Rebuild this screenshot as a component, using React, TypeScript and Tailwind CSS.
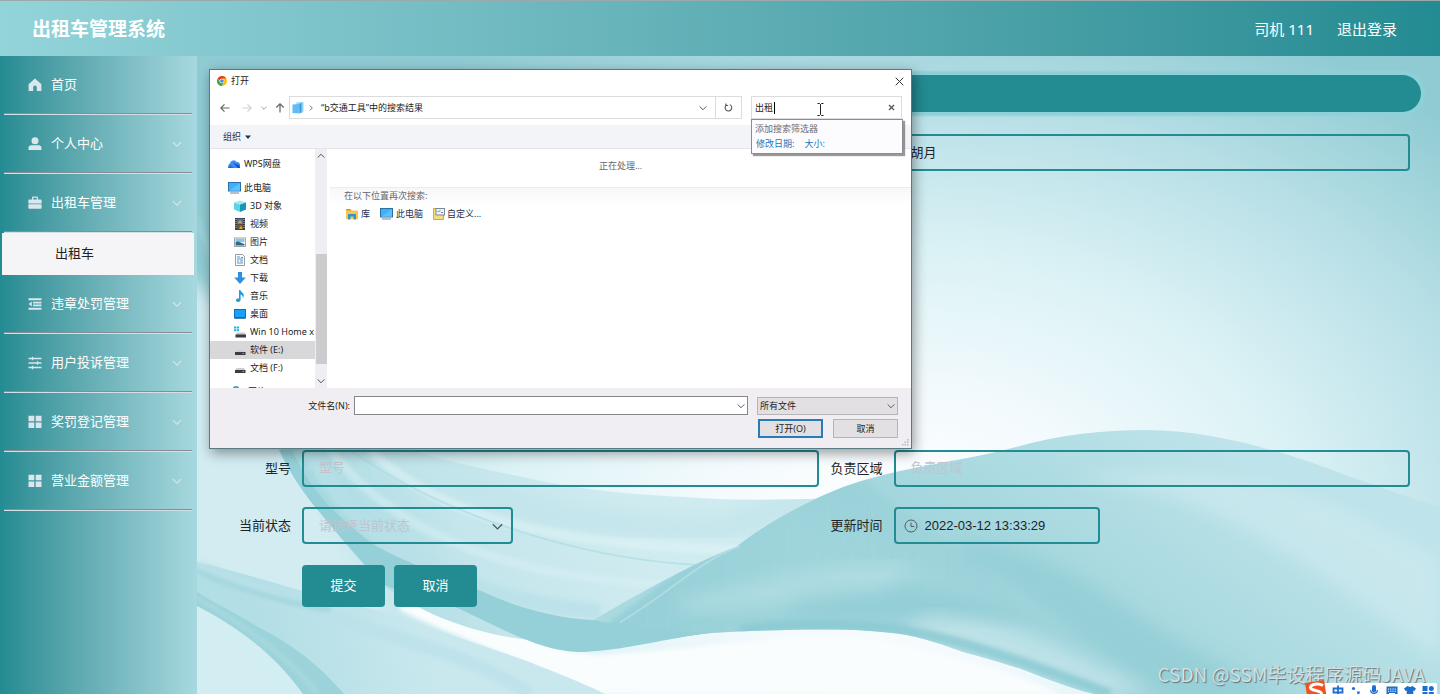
import React, { useState } from "react"

interface iconProps {
    className?: string
}

function HomeIcon({ className = "" }: iconProps) {
    return <svg viewBox="0 0 14 14" className={className} fill="currentColor">
        <path d="M7 .6 .6 6.200V13h4.600V9.300a1.800 1.800 0 0 1 3.600 0V13h4.600V6.200z" />
    </svg>
}

function UserIcon({ className = "" }: iconProps) {
    return <svg viewBox="0 0 14 14" className={className} fill="currentColor">
        <circle cx="7" cy="3.700" r="3.500" />
        <path d="M.5 13v-2.200c0-1.800 1.200-2.600 2.800-2.600h7.400c1.600 0 2.800.8 2.800 2.600V13z" />
    </svg>
}

function CaseIcon({ className = "" }: iconProps) {
    return <svg viewBox="0 0 14 14" className={className} fill="currentColor">
        <path d="M5 .6h4a1 1 0 0 1 1 1v1.800h2.800a.8.8 0 0 1 .8.8v3.200H.4V4.200a.8.8 0 0 1 .8-.8H4V1.600a1 1 0 0 1 1-1zm.2 1.200v1.600h3.600V1.800zM.4 8.200h13.200V12a.8.8 0 0 1-.8.8H1.200a.8.8 0 0 1-.8-.8z" />
    </svg>
}

function UnfoldIcon({ className = "" }: iconProps) {
    return <svg viewBox="0 0 14 14" className={className} fill="currentColor">
        <path d="M.5 1.300h13v2H.5zM5 4.700h8.500v1.700H5zM5 7.600h8.500v1.700H5zM.5 10.700h13v2H.5zM3.800 4.500v5L.6 7z" />
    </svg>
}

function OperationIcon({ className = "" }: iconProps) {
    return <svg viewBox="0 0 14 14" className={className} stroke="currentColor" fill="none" strokeWidth="1.300">
        <path d="M.5 2.500h13M.5 7h13M.5 11.500h13M4.500.8v3.400M9.500 5.300v3.400M4.500 9.800v3.400" />
    </svg>
}

function GridIcon({ className = "" }: iconProps) {
    return <svg viewBox="0 0 14 14" className={className} fill="currentColor">
        <path d="M.5 .8h5.800v5.400H.5zM7.700.8h5.800v5.400H7.700zM.5 7.500h5.800v5.400H.5zM7.700 7.500h5.800v5.400H7.700z" />
    </svg>
}

function ChevronDown({ className = "" }: iconProps) {
    return <svg viewBox="0 0 10 10" className={className} fill="none" stroke="currentColor" strokeWidth="1.200">
        <path d="M.8 3 5 7.200 9.200 3" />
    </svg>
}

function ClockIcon({ className = "" }: iconProps) {
    return <svg viewBox="0 0 14 14" className={className} fill="none" stroke="currentColor" strokeWidth="1">
        <circle cx="7" cy="7" r="6" />
        <path d="M7 3.500v4h3.200" />
    </svg>
}

function ChromeIcon({ className = "" }: iconProps) {
    return <svg viewBox="0 0 24 24" className={className}>
        <circle cx="12" cy="12" r="12" fill="#fbc116" />
        <path d="M1.600 6A12 12 0 0 1 22.400 6H12a6 6 0 0 0-5.600 4z" fill="#e33b2e" />
        <path d="M1.600 6A12 12 0 0 0 11 24l5-8.500A6 6 0 0 1 6.800 15z" fill="#2da94f" />
        <circle cx="12" cy="12" r="5.600" fill="#fff" />
        <circle cx="12" cy="12" r="4.400" fill="#4285f4" />
    </svg>
}

function CloudIcon({ className = "" }: iconProps) {
    return <svg viewBox="0 0 12 12" className={className}>
        <path d="M2.500 10A2.300 2.300 0 0 1 2 5.500 3.600 3.600 0 0 1 8.600 4a3 3 0 0 1 .9 6z" fill="#3d8df5" />
        <path d="M0 10c0-2 2-3 3.500-2L6 10z" fill="#1f6be0" />
        <path d="M5 4.500 9.500 10H12c.2-2-1-3.500-3-3.500z" fill="#1557c0" />
    </svg>
}

function MonitorIcon({ className = "" }: iconProps) {
    return <svg viewBox="0 0 13 12" className={className}>
        <rect x=".5" y=".5" width="12" height="8.500" fill="#3fb0f7" stroke="#2b6fa3" />
        <path d="M1 9 12 1v8z" fill="#72cbff" opacity=".6" />
        <path d="M2 11h9" stroke="#8a97a3" strokeWidth="1.200" />
    </svg>
}

function CubeIcon({ className = "" }: iconProps) {
    return <svg viewBox="0 0 12 12" className={className}>
        <path d="M0 2.500 6 .5l6 2-6 2z" fill="#a5e9f2" />
        <path d="M0 2.500 6 4.500V12L0 9.500z" fill="#5fd3e4" />
        <path d="M12 2.500 6 4.500V12l6-2.500z" fill="#1795b5" />
    </svg>
}

function FilmIcon({ className = "" }: iconProps) {
    return <svg viewBox="0 0 12 12" className={className}>
        <rect x="1" width="10" height="12" fill="#3b3b42" />
        <rect x="3.200" y=".8" width="5.600" height="4.800" fill="#4f77c8" />
        <rect x="3.200" y="6.400" width="5.600" height="4.800" fill="#6d5a3a" />
        <path d="m3.200 5.600 3-3 2.600 3zM5 11l2-3.500L8.800 11z" fill="#e0a33a" />
        <path d="M2 1v10M10 1v10" stroke="#d9d9dd" strokeWidth=".9" strokeDasharray="1 1" />
    </svg>
}

function PictureIcon({ className = "" }: iconProps) {
    return <svg viewBox="0 0 12 12" className={className}>
        <rect x=".5" y="2" width="11" height="8.500" fill="#f4f7f9" stroke="#9aa5ad" />
        <rect x="1.600" y="3" width="8.800" height="3" fill="#8ac4ea" />
        <path d="M1.600 9.500V6l3-.5 3 1.500 2.800 1v1.500z" fill="#2f6c82" />
    </svg>
}

function DocIcon({ className = "" }: iconProps) {
    return <svg viewBox="0 0 12 12" className={className}>
        <path d="M1.500.5h7l2 2v9h-9z" fill="#fafafa" stroke="#9b9ba1" />
        <path d="M3 3h3M7 3.500h2M3 5h6M3 7h2M6 7h3M3 9h6" stroke="#4c9bd3" />
    </svg>
}

function DownloadIcon({ className = "" }: iconProps) {
    return <svg viewBox="0 0 12 12" className={className}>
        <path d="M4 0h4v5.500h3.800L6 12 .2 5.500H4z" fill="#2f8ee0" />
    </svg>
}

function MusicIcon({ className = "" }: iconProps) {
    return <svg viewBox="0 0 12 12" className={className}>
        <path d="M5 0h1.400c.3 2.200 3.400 2.500 3.400 5.500 0 1.200-.5 2-1 2.700.3-2-.6-3.200-2.200-3.700v5C6.600 11.300 5.300 12 4 12s-2.200-.8-2.200-1.900S3 8.300 5 8.400z" fill="#1e9be8" />
    </svg>
}

function DesktopIcon({ className = "" }: iconProps) {
    return <svg viewBox="0 0 12 12" className={className}>
        <rect x=".5" y="1.500" width="11" height="8.500" fill="#18a0fb" stroke="#1170bd" />
        <path d="M1 10h10" stroke="#0d4f8a" />
    </svg>
}

function WinDriveIcon({ className = "" }: iconProps) {
    return <svg viewBox="0 0 12 12" className={className}>
        <path d="M0 .5h2.200v2H0zM2.800.5H5v2H2.800zM0 3.200h2.200v2H0zM2.800 3.200H5v2H2.800z" fill="#20b3e8" />
        <path d="M3 6.500h7.500L12 9H1.500z" fill="#c9c9cd" />
        <rect x="1.500" y="8.500" width="10.500" height="3" fill="#3c3c40" />
    </svg>
}

function DriveIcon({ className = "" }: iconProps) {
    return <svg viewBox="0 0 12 12" className={className}>
        <path d="M2.500 6h7.500L11.500 8.500H1z" fill="#cfcfd3" />
        <rect x="1" y="8" width="10.500" height="3" fill="#3c3c40" />
        <rect x="8.500" y="9" width="1.500" height="1" fill="#5ec46a" />
    </svg>
}

function NetIcon({ className = "" }: iconProps) {
    return <svg viewBox="0 0 12 12" className={className}>
        <circle cx="4" cy="3.500" r="3.500" fill="#3f9fc8" />
        <rect x="3" y="4" width="9" height="6" fill="#5fc0ef" />
    </svg>
}

function LibraryIcon({ className = "" }: iconProps) {
    return <svg viewBox="0 0 12 12" className={className}>
        <path d="M0 1h4.500L5.500 2.500H12V11H0z" fill="#f5c84c" />
        <path d="M0 1h4.500L5.500 2.500H0z" fill="#d99b1f" />
        <path d="M2 11.500V6h8v5.500H7.500V8.500h-3v3z" fill="#3590d8" />
    </svg>
}

function CustomIcon({ className = "" }: iconProps) {
    return <svg viewBox="0 0 12 12" className={className}>
        <path d="M.5.500h5v3h5v8h-10z" fill="#f8dc7c" stroke="#cfa93a" />
        <rect x="3" y=".5" width="8.500" height="6.500" fill="#eef4fb" stroke="#7d8796" />
        <path d="m4.500 3 1 1L7.500 2M8 4.500h2" stroke="#2b6fa3" fill="none" strokeWidth=".8" />
    </svg>
}

function ResultsIcon({ className = "" }: iconProps) {
    return <svg viewBox="0 0 12 12" className={className}>
        <path d="M4 .5 11.500 0v9.500L9 11z" fill="#8fd6fb" />
        <path d="M.5 2.500 7.500 2v9.500L.5 11z" fill="#5dbdf6" />
        <path d="M7.500 2 9.500.800V10.500l-2 1z" fill="#3a9ade" />
    </svg>
}

// silk waves behind the form
function Waves() {
    return <svg viewBox="197 56 1243 638" preserveAspectRatio="none" className="absolute inset-0 h-full w-full">
        <defs>
            <radialGradient id="sky" gradientUnits="userSpaceOnUse" cx="0" cy="0" r="1" gradientTransform="translate(900 530) scale(800 560)">
                <stop offset="0" stopColor="#ffffff" />
                <stop offset=".25" stopColor="#f3fafd" />
                <stop offset=".5" stopColor="#dbf2f5" />
                <stop offset=".75" stopColor="#b9e0e7" />
                <stop offset="1" stopColor="#90cbd3" />
            </radialGradient>
            <linearGradient id="hill" gradientUnits="userSpaceOnUse" x1="1200" y1="430" x2="1020" y2="690">
                <stop offset="0" stopColor="#bee3ea" />
                <stop offset=".4" stopColor="#aedce2" />
                <stop offset=".8" stopColor="#a1d5dc" />
                <stop offset="1" stopColor="#a9dae0" />
            </linearGradient>
            <linearGradient id="valley" x1="0" y1="0" x2="1" y2="0">
                <stop offset="0" stopColor="#8ecbd4" />
                <stop offset="1" stopColor="#8ecbd4" stopOpacity="0" />
            </linearGradient>
            <linearGradient id="veil" gradientUnits="userSpaceOnUse" x1="340" y1="570" x2="600" y2="440">
                <stop offset="0" stopColor="#a9dae1" />
                <stop offset=".45" stopColor="#c5e6ec" />
                <stop offset="1" stopColor="#d0ecf0" />
            </linearGradient>
            <linearGradient id="cloth" gradientUnits="userSpaceOnUse" x1="260" y1="640" x2="420" y2="600">
                <stop offset="0" stopColor="#b2dee5" />
                <stop offset="1" stopColor="#c9e8ee" />
            </linearGradient>
            <filter id="soft"><feGaussianBlur stdDeviation="9" /></filter>
            <filter id="thin"><feGaussianBlur stdDeviation="2" /></filter>
            <clipPath id="hillClip">
                <path d="M593 620C650 587 700 560 736 547 770 520 820 495 849 485 900 467 970 460 1016 447 1060 435 1100 430 1147 430 1200 430 1260 445 1310 462 1360 480 1400 495 1440 507V694H1094C1070 688 1050 680 1024 670 1000 662 985 658 963 652 930 640 910 634 882 632 850 628 780 629 711 633 660 638 620 650 577 652z" />
            </clipPath>
            <clipPath id="veilClip">
                <path d="M279 446C300 490 340 540 381 583 420 615 480 635 530 640L593 620C650 587 700 560 736 547 780 515 810 500 837 498 780 500 730 501 687 497 620 494 570 488 523 477 470 466 430 458 401 446z" />
            </clipPath>
        </defs>
        <rect x="197" y="56" width="1243" height="638" fill="url(#sky)" />
        <path d="M150 260C260 300 290 420 340 520L420 694H150z" fill="#d2ecf1" filter="url(#soft)" />
        <path d="M400 580C480 600 520 650 600 655 700 650 800 630 880 640 960 660 1010 670 1060 694H590C530 660 460 640 400 610z" fill="#fafdfe" filter="url(#thin)" />
        <path d="M197 230C215 260 240 380 283 450L303 450C260 380 225 280 197 210z" fill="#9dd2da" filter="url(#thin)" />
        <path d="M279 446C300 490 340 540 381 583 420 615 480 635 530 640L593 620C650 587 700 560 736 547 780 515 810 500 837 498 780 500 730 501 687 497 620 494 570 488 523 477 470 466 430 458 401 446z" fill="url(#veil)" />
        <g clipPath="url(#veilClip)" fill="none">
            <path d="M410 450C500 520 600 525 720 530 L860 480" stroke="#c0e3ea" strokeWidth="26" opacity=".7" filter="url(#soft)" />
            <path d="M370 450C440 520 560 545 740 550" stroke="#def3f6" strokeWidth="10" opacity=".6" filter="url(#thin)" />
            <path d="M330 450C400 540 520 580 680 585" stroke="#daf1f5" strokeWidth="9" opacity=".5" filter="url(#thin)" />
            <path d="M310 450C370 560 470 600 600 612" stroke="#b8e0e8" strokeWidth="16" opacity=".7" filter="url(#thin)" />
            <path d="M350 450C450 520 590 560 700 565" stroke="#a9dae1" strokeWidth="2" opacity=".6" />
            <path d="M292 450C340 540 400 590 520 622" stroke="#a3d6de" strokeWidth="8" opacity=".7" filter="url(#thin)" />
        </g>
        <g clipPath="url(#hillClip)">
            <rect x="570" y="420" width="870" height="274" fill="url(#hill)" />
            <path d="M560 660 720 540 849 470 1020 600 882 650z" fill="url(#valley)" opacity=".8" filter="url(#thin)" />
            <path d="M1060 480C1200 480 1300 560 1440 660V560C1340 500 1230 450 1060 480z" fill="#cfebf0" opacity=".6" filter="url(#soft)" />
            <path d="M960 540C1050 550 1100 590 1160 630 1220 665 1260 680 1290 700H1180C1080 650 1040 590 960 560z" fill="#8ccad3" opacity=".6" filter="url(#soft)" />
            <path d="M800 590C860 575 960 590 1040 620 980 625 870 625 780 615z" fill="#8ecbd3" opacity=".7" filter="url(#soft)" />
            <path d="M930 615C1000 620 1080 650 1150 694H1100C1030 670 970 650 900 630z" fill="#c4e5ea" opacity=".8" filter="url(#soft)" />
            <path d="M680 600C760 580 820 560 920 565L880 590C800 600 740 612 680 612z" fill="#b9e1e6" opacity=".6" filter="url(#soft)" />
            <path d="M740 630C800 622 850 625 882 628 940 632 1020 660 1110 694" fill="none" stroke="#8ac9d2" strokeWidth="10" opacity=".8" filter="url(#thin)" />
            <path d="M620 622C660 600 700 560 740 546" fill="none" stroke="#b9e0e6" strokeWidth="2" opacity=".7" />
        </g>
        <path d="M279 450C300 495 328 522 381 583 405 595 430 598 458 608 500 628 540 651 577 652 620 652 670 637 711 633 670 632 630 628 593 620 555 618 520 608 490 595 440 572 400 562 370 542 335 515 310 490 292 450z" fill="#95cfd7" />
        <path d="M381 583C405 595 430 598 458 608 435 585 410 575 381 560z" fill="#95cfd7" />
        <path d="M197 562C230 570 265 580 299 590 340 602 370 608 401 617 450 635 490 648 524 660 560 674 590 686 605 694H303C270 650 240 620 197 600z" fill="url(#cloth)" />
        <path d="M197 566C270 600 340 620 420 645 470 660 500 675 530 694" fill="none" stroke="#bbe1ea" strokeWidth="14" opacity=".7" filter="url(#thin)" />
        <path d="M197 571C230 586 270 600 330 610" fill="none" stroke="#93cdd6" strokeWidth="5" opacity=".6" filter="url(#thin)" />
        <path d="M197 600C240 635 280 660 303 694H197z" fill="#d3eef2" />
        <path d="M197 592C215 604 240 615 258 627 300 648 325 672 344 694H303C275 655 240 628 197 606z" fill="#9cd3da" />
        <path d="M197 598C240 622 290 658 318 694" fill="none" stroke="#b5dfe5" strokeWidth="3" opacity=".7" filter="url(#thin)" />
    </svg>
}

const menus = [
    { name: "首页", Icon: HomeIcon, arrow: false },
    { name: "个人中心", Icon: UserIcon, arrow: true },
    { name: "出租车管理", Icon: CaseIcon, arrow: true, child: "出租车" },
    { name: "违章处罚管理", Icon: UnfoldIcon, arrow: true },
    { name: "用户投诉管理", Icon: OperationIcon, arrow: true },
    { name: "奖罚登记管理", Icon: GridIcon, arrow: true },
    { name: "营业金额管理", Icon: GridIcon, arrow: true },
]

function Sidebar() {
    return <nav className="w-[197px] shrink-0 bg-linear-to-r from-[#238b92] to-[#a6d9df] text-[13px] text-white">
        <ul>
            {menus.map(({ name, Icon, arrow, child }) => (
                <li key={name}>
                    <a href="#" className="mr-[5px] ml-1 flex h-[59px] items-center border-b border-[#d6dfe6] pr-[10px] pl-6 shadow-[inset_0_-1px_0_#8b8b94]">
                        <Icon className="mr-[9px] h-[14px] w-[14px] text-[#dbe6ef]" />
                        <span className="flex-1">{name}</span>
                        {arrow && <ChevronDown className="h-[10px] w-[10px] text-[#cfe3ea]" />}
                    </a>
                    {child && <a href="#" className="mr-[3px] ml-[2px] flex h-[42px] items-center bg-[#f5f4f7] pl-[53px] text-[#222]">{child}</a>}
                </li>
            ))}
        </ul>
    </nav>
}

interface fieldProps {
    id: string,
    label?: string,
    placeholder?: string,
    value?: string
}

function Field({ id, label, placeholder, value }: fieldProps) {
    return <div className="flex items-center">
        <label htmlFor={id} className="w-[75px] shrink-0 pr-[11px] text-right">{label}</label>
        <input id={id} defaultValue={value} placeholder={placeholder} className="h-[37px] min-w-0 flex-1 rounded-[4px] border-2 border-[#238b92] bg-transparent px-[15px] pb-[2px] placeholder:text-[#c3c3cd]" />
    </div>
}

function TaxiForm() {
    return <form className="mt-[22px] px-[30px] text-[13px] text-[#1f2326]" onSubmit={(e) => e.preventDefault()}>
        <div className="mb-[279px] grid grid-cols-2">
            <Field id="plate" />
            <Field id="driver" value="胡月" />
        </div>
        <div className="grid grid-cols-2 gap-y-5">
            <Field id="model" label="型号" placeholder="型号" />
            <Field id="area" label="负责区域" placeholder="负责区域" />
            <div className="flex items-center">
                <label htmlFor="state" className="w-[75px] shrink-0 pr-[11px] text-right">当前状态</label>
                <div className="relative">
                    <select id="state" className="h-[37px] w-[211px] appearance-none rounded-[4px] border-2 border-[#238b92] px-[15px] text-[#c3c3cd]">
                        <option>请选择当前状态</option>
                    </select>
                    <ChevronDown className="pointer-events-none absolute top-[14px] right-[10px] h-[11px] w-[11px] text-[#4d5559]" />
                </div>
            </div>
            <div className="flex items-center">
                <label htmlFor="time" className="w-[75px] shrink-0 pr-[11px] text-right">更新时间</label>
                <div className="flex h-[37px] w-[206px] items-center gap-[7px] rounded-[4px] border-2 border-[#238b92] pl-2">
                    <ClockIcon className="h-[14px] w-[14px] shrink-0 text-[#4d5f63]" />
                    <input id="time" defaultValue="2022-03-12 13:33:29" className="min-w-0 flex-1 bg-transparent" />
                </div>
            </div>
        </div>
        <div className="mt-[21px] ml-[75px] flex gap-[9px] text-white">
            <button type="submit" className="h-[42px] w-[83px] rounded-[4px] bg-[#238b92]">提交</button>
            <button type="button" className="h-[42px] w-[83px] rounded-[4px] bg-[#238b92]">取消</button>
        </div>
    </form>
}

const places = [
    { name: "3D 对象", Icon: CubeIcon },
    { name: "视频", Icon: FilmIcon },
    { name: "图片", Icon: PictureIcon },
    { name: "文档", Icon: DocIcon },
    { name: "下载", Icon: DownloadIcon },
    { name: "音乐", Icon: MusicIcon },
    { name: "桌面", Icon: DesktopIcon },
    { name: "Win 10 Home x", Icon: WinDriveIcon },
    { name: "软件 (E:)", Icon: DriveIcon },
    { name: "文档 (F:)", Icon: DriveIcon },
]

function PlaceTree() {
    const [active, setActive] = useState("软件 (E:)")

    return <div className="flex h-[239px] shrink-0">
        <ul className="w-[105px] overflow-hidden pt-[6px] whitespace-nowrap">
            <li className="mb-[6px] flex h-[18px] items-center gap-1 pl-[18px]"><CloudIcon className="h-3 w-3 shrink-0" />WPS网盘</li>
            <li className="flex h-[18px] items-center gap-[3px] pl-[18px]"><MonitorIcon className="h-3 w-[13px] shrink-0" />此电脑</li>
            {places.map(({ name, Icon }) => (
                <li key={name} onClick={() => setActive(name)} className={`flex h-[18px] items-center gap-1 pl-6 ${active === name ? "bg-[#d8d7da]" : ""}`}>
                    <Icon className="h-3 w-3 shrink-0" />{name}
                </li>
            ))}
            <li className="mt-[6px] flex h-[18px] items-center gap-1 pl-[22px]"><NetIcon className="h-3 w-3 shrink-0" />网络</li>
        </ul>
        <div className="flex w-3 flex-col items-center bg-[#f0eef2] py-[3px] text-[#4b4b50]">
            <ChevronDown className="h-2 w-2 rotate-180" />
            <div className="mt-[94px] h-[110px] w-[11px] bg-[#cdcbce]"></div>
            <ChevronDown className="mt-auto h-2 w-2" />
        </div>
    </div>
}

function OpenDialog() {
    return <div role="dialog" aria-label="打开" className="absolute top-[69px] left-[209px] w-[703px] border border-[#567b82] bg-white text-[9px] text-[#1c1c1e] shadow-[2px_4px_12px_rgba(0,0,0,0.4)]">
        <div className="flex h-[22px] items-center pr-[7px] pl-[7px]">
            <ChromeIcon className="mr-1 h-[10px] w-[10px]" />
            <span className="flex-1">打开</span>
            <button aria-label="关闭">
                <svg viewBox="0 0 9 9" className="h-[9px] w-[9px]" stroke="#333" fill="none"><path d="m.7.700 7.600 7.600M8.300.700.700 8.300" /></svg>
            </button>
        </div>
        <div className="mt-1 flex h-[23px] items-center pr-[9px] pl-[10px]">
            <svg viewBox="0 0 10 10" className="h-[10px] w-[10px]" stroke="#666" fill="none" strokeWidth="1.200"><path d="M9.500 5H1M4.500 1.300.800 5l3.700 3.700" /></svg>
            <svg viewBox="0 0 10 10" className="ml-3 h-[10px] w-[10px]" stroke="#cfcfd4" fill="none" strokeWidth="1.200"><path d="M.5 5H9M5.500 1.300 9.200 5 5.500 8.700" /></svg>
            <ChevronDown className="ml-[9px] h-[6px] w-[6px] text-[#777]" />
            <svg viewBox="0 0 10 10" className="ml-2 h-[10px] w-[10px]" stroke="#666" fill="none" strokeWidth="1.200"><path d="M5 9.500V1M1.300 4.500 5 .800l3.700 3.700" /></svg>
            <div className="ml-1 flex h-[23px] flex-1 items-center border border-[#dcdce0] pl-[2px]">
                <ResultsIcon className="h-3 w-3" />
                <ChevronDown className="mx-[4px] h-[6px] w-[6px] -rotate-90 text-[#444]" />
                <span className="ml-[3px] flex-1">“b交通工具”中的搜索结果</span>
                <ChevronDown className="mr-2 h-2 w-2 text-[#555]" />
                <div className="flex h-full w-[26px] items-center justify-center border-l border-[#dcdce0]">
                    <svg viewBox="0 0 10 10" className="h-[9px] w-[9px]" stroke="#555" fill="none" strokeWidth="1.200"><path d="M6.500 1.800A3.700 3.700 0 1 1 3 2M2 .500v2.300h2.500" /></svg>
                </div>
            </div>
            <div className="relative ml-[9px] flex h-[23px] w-[151px] items-center border border-[#dcdce0] pr-[6px] pl-[3px]">
                <input aria-label="搜索" defaultValue="出租" className="w-full min-w-0 bg-transparent" />
                <span className="absolute top-[5px] left-[22px] h-3 w-px bg-black"></span>
                <svg viewBox="0 0 7 13" className="absolute top-[6px] left-[65px] h-[13px] w-[7px]" stroke="#222" fill="none"><path d="M.5.500h2l1 1 1-1h2M3.500 1.500v10M.5 12.500h2l1-1 1 1h2" /></svg>
                <button aria-label="清除">
                    <svg viewBox="0 0 7 7" className="h-[7px] w-[7px]" stroke="#555" fill="none" strokeWidth="1.300"><path d="m1 1 5 5M6 1 1 6" /></svg>
                </button>
                <div className="absolute top-[22px] -left-px z-10 h-[35px] w-[152px] border border-[#8b8b92] bg-[#fcfcfe] pt-px pl-[3px] leading-[15px] text-[#6d6d72] shadow-[2px_2px_1px_rgba(0,0,0,0.4)]">
                    <div>添加搜索筛选器</div>
                    <div className="flex gap-[10px] pl-px text-[#1a77b5]">
                        <a href="#">修改日期:</a>
                        <a href="#">大小:</a>
                    </div>
                </div>
            </div>
        </div>
        <div className="mt-[6px] flex h-6 items-center border-b border-[#e4e4e9] bg-[#f3f4f8] pl-[13px]">
            <button className="flex items-center gap-1 text-[#1e3250]">组织
                <svg viewBox="0 0 6 4" className="h-1 w-[6px]" fill="#1e3250"><path d="M0 .500h6L3 4z" /></svg>
            </button>
        </div>
        <div className="flex">
            <PlaceTree />
            <div className="ml-[3px] flex-1 text-[#66666b]">
                <div className="h-[39px] border-b border-[#ececf0] pt-[9px] text-center leading-[15px]">正在处理...</div>
                <div className="bg-linear-to-b from-[#f7f7fa] to-white to-50% pl-[14px]">
                    <div className="leading-[15px]">在以下位置再次搜索:</div>
                    <div className="mt-1 flex gap-[10px] pl-[2px] text-[#1e3250]">
                        <a href="#" className="flex items-center gap-[3px]"><LibraryIcon className="h-3 w-3" />库</a>
                        <a href="#" className="flex items-center gap-[3px]"><MonitorIcon className="h-3 w-[13px]" />此电脑</a>
                        <a href="#" className="flex items-center gap-[2px]"><CustomIcon className="h-3 w-3" />自定义...</a>
                    </div>
                </div>
            </div>
        </div>
        <div className="relative h-[60px] bg-[#f0eef2] pt-2 pr-[13px]">
            <div className="flex items-center">
                <label htmlFor="filename" className="w-[144px] pr-1 text-right">文件名(N):</label>
                <div className="relative flex-1">
                    <input id="filename" className="block h-[19px] w-full border border-[#85858b] bg-white px-1" />
                    <ChevronDown className="absolute top-[6px] right-[3px] h-2 w-2 text-[#555]" />
                </div>
                <div className="relative ml-[9px]">
                    <select aria-label="文件类型" className="block h-[18px] w-[141px] appearance-none border border-[#b5b4b9] bg-[#e2e0e3] px-[2px]">
                        <option>所有文件</option>
                    </select>
                    <ChevronDown className="pointer-events-none absolute top-[5px] right-[3px] h-2 w-2 text-[#555]" />
                </div>
            </div>
            <div className="mt-1 flex justify-end gap-[10px]">
                <button className="h-[19px] w-[65px] border-2 border-[#2a7ab8] bg-[#e2e0e3]">打开(O)</button>
                <button className="h-[19px] w-[65px] border border-[#b5b4b9] bg-[#e2e0e3]">取消</button>
            </div>
            <svg viewBox="0 0 7 7" className="absolute right-[2px] bottom-[2px] h-[7px] w-[7px]" fill="#b9b8bd"><path d="M5 0h1.500v1.500H5zM5 2.500h1.500V4H5zM5 5h1.500v1.500H5zM2.500 2.500H4V4H2.500zM2.500 5H4v1.500H2.500zM0 5h1.500v1.500H0z" /></svg>
        </div>
    </div>
}

// top edge of the input method bar, it peeks over the bottom of the window
function ImeBar() {
    return <div className="absolute right-[3px] bottom-0 flex h-[15px] items-start overflow-hidden">
        <svg viewBox="0 0 24 24" className="z-10 -mr-2 h-6 w-6 shrink-0">
            <path d="m1 4 19-3 3 19-19 3z" fill="#ee5422" />
            <path d="M19 6.500C14 4 7 5 6.500 8.500 6 12 18 11 17.500 15c-.5 3.500-8 4-12.500 1.500" fill="none" stroke="#fff" strokeWidth="3" />
        </svg>
        <div className="mt-1 flex h-6 gap-[6px] rounded-[2px] bg-white pt-[2px] pr-[3px] pl-3 text-[#1c6fd0]">
            <svg viewBox="0 0 12 12" className="h-3 w-3" fill="none" stroke="currentColor" strokeWidth="1.800"><path d="M1.500 3.500h9v4h-9zM6 .500V12" /></svg>
            <svg viewBox="0 0 12 12" className="h-3 w-3" fill="currentColor"><circle cx="3.500" cy="3.500" r="1.600" /><path d="M7 6.500h3l-1 3.500H7.500z" /></svg>
            <svg viewBox="0 0 12 12" className="h-3 w-3" fill="currentColor"><rect x="4" width="4" height="7.500" rx="2" /><path d="M2 5h1.300a2.700 2.700 0 0 0 5.400 0H10a4 4 0 0 1-3.300 4V12H5.300V9A4 4 0 0 1 2 5z" /></svg>
            <svg viewBox="0 0 12 12" className="h-3 w-3"><rect x=".5" y="1.500" width="11" height="9" fill="currentColor" /><path d="M2 4h8M2 6.200h8" stroke="#fff" strokeDasharray="1.200 1" /><path d="M3 8.500h6" stroke="#fff" /></svg>
            <svg viewBox="0 0 12 12" className="h-3 w-3" fill="currentColor"><path d="M3.500 1 6 2l2.500-1L12 3.500 10.500 6l-1.200-.5V12H2.700V5.500L1.500 6 0 3.500z" /></svg>
            <svg viewBox="0 0 12 12" className="h-3 w-3" fill="currentColor"><path d="M.5 1H5.500v5h-5zM.5 7h5v5h-5zM6.800 7h5v5h-5z" /><circle cx="9.300" cy="3.500" r="2.500" /></svg>
        </div>
    </div>
}

export default function App() {
    return <div className="relative flex min-h-screen flex-col overflow-hidden font-['Liberation_Sans','Noto_Sans_CJK_SC',sans-serif]">
        <header className="flex h-14 items-center justify-between border-t border-[#9aa9ac] bg-linear-to-r from-[#93d4da] to-[#238b92] pt-px pr-[43px] pl-8 font-['Noto_Sans','Noto_Sans_CJK_SC',sans-serif] text-[15px] text-white">
            <h1 className="text-[19px] font-bold">出租车管理系统</h1>
            <div className="flex gap-[23px]">
                <span>司机 111</span>
                <a href="#">退出登录</a>
            </div>
        </header>
        <div className="flex flex-1">
            <Sidebar />
            <main className="relative min-w-0 flex-1">
                <Waves />
                <div className="relative pt-[19px]">
                    <div className="mx-[19px] h-[37px] rounded-full bg-[#238b92] shadow-[0_0_2px_4px_#8fd1d9]"></div>
                    <TaxiForm />
                </div>
            </main>
        </div>
        <div className="font-['Noto_Sans','Noto_Sans_CJK_SC',sans-serif]">
            <OpenDialog />
        </div>
        <div className="absolute right-[15px] bottom-[6px] font-['Noto_Sans_CJK_SC',sans-serif] text-[19px] leading-7 text-[#d3dfe2] [text-shadow:1px_1px_1px_#5f7378]">CSDN @SSM毕设程序源码JAVA</div>
        <ImeBar />
    </div>
}
